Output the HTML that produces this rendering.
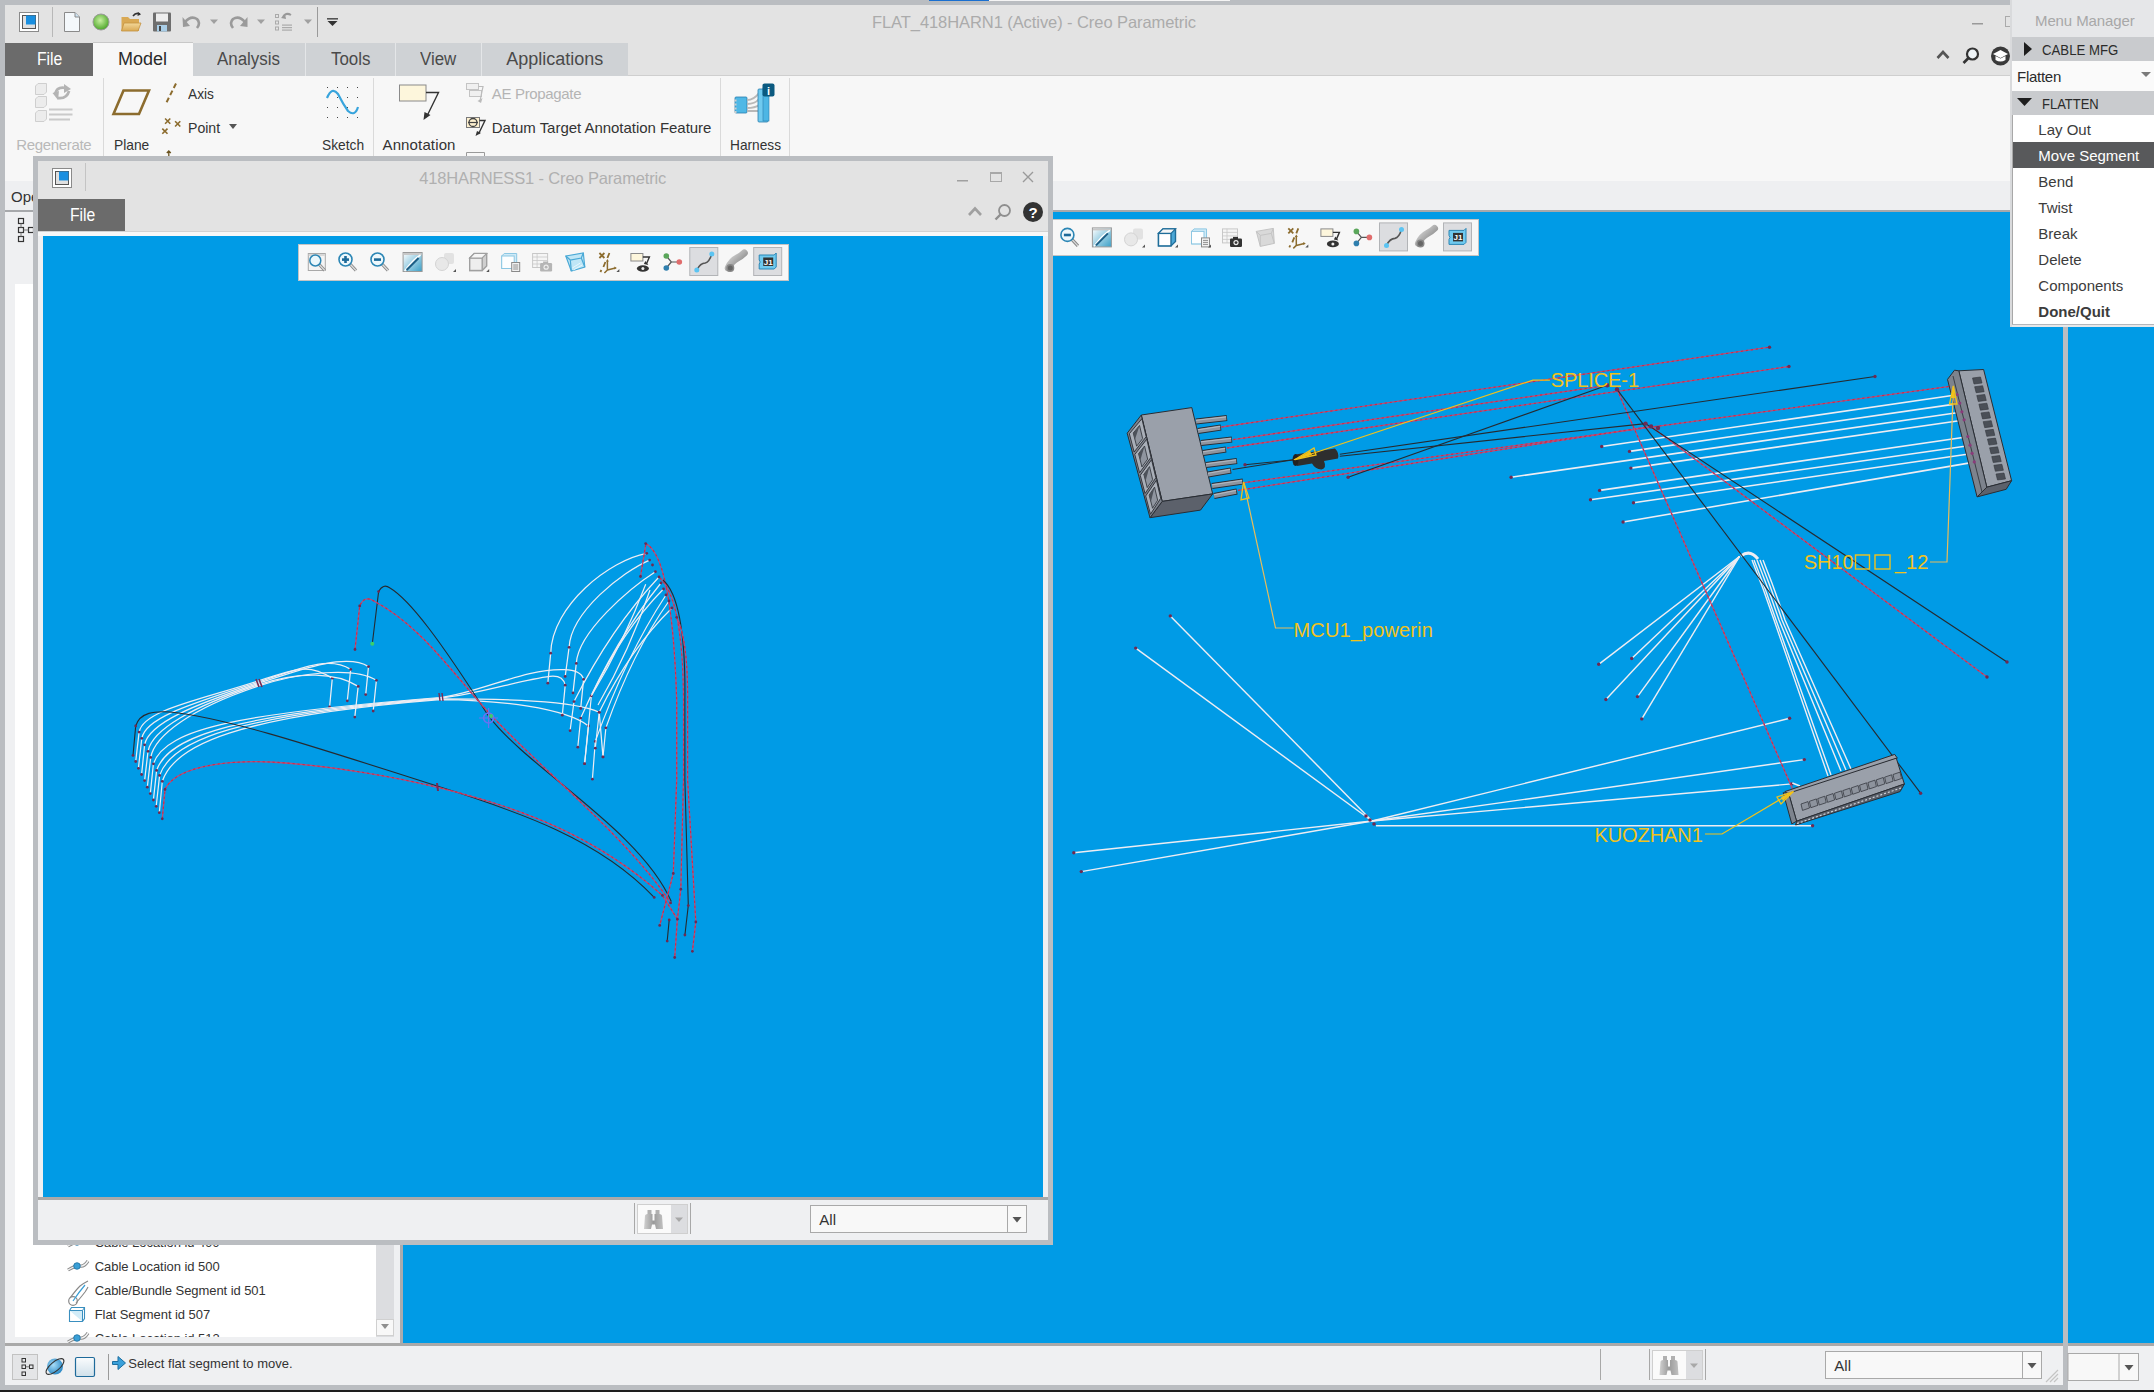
<!DOCTYPE html><html><head><meta charset="utf-8"><style>html,body{margin:0;padding:0;}body{width:2154px;height:1392px;overflow:hidden;position:relative;background:#babdc1;font-family:"Liberation Sans",sans-serif;}</style></head><body><div style="position:absolute;left:0px;top:1390px;width:2154px;height:2px;background:#1e1e1e;"></div>
<div style="position:absolute;left:929px;top:0px;width:60px;height:1px;background:#1a6fd0;"></div>
<div style="position:absolute;left:989px;top:0px;width:241px;height:1px;background:#f4f4f4;"></div>
<div style="position:absolute;left:5px;top:5px;width:2058px;height:70px;background:#e3e3e3;"></div>
<div style="position:absolute;left:5px;top:75px;width:2058px;height:1px;background:#cfcfcf;"></div>
<div style="position:absolute;left:5px;top:76px;width:2058px;height:105px;background:#f7f7f7;"></div>
<div style="position:absolute;left:5px;top:181px;width:2058px;height:29px;background:#eeeff1;"></div>
<div style="position:absolute;left:5px;top:210px;width:2058px;height:2px;background:#a6a8ab;"></div>
<div style="position:absolute;left:5px;top:212px;width:395px;height:1131px;background:#eff0f2;"></div>
<div style="position:absolute;left:15px;top:284px;width:361px;height:1053px;background:#ffffff;"></div>
<div style="position:absolute;left:376px;top:284px;width:18px;height:1053px;background:#dcdde0;"></div>
<div style="position:absolute;left:376px;top:1319px;width:16px;height:15px;background:#f8f8f8;border:1px solid #d0d0d0;"></div>
<svg style="position:absolute;left:380px;top:1323px;" width="12" height="8" viewBox="0 0 12 8"><path d="M1 1 L9 1 L5 6 Z" fill="#8f8f8f"/></svg>
<div style="position:absolute;left:400px;top:212px;width:3px;height:1131px;background:#a9abae;"></div>
<div style="position:absolute;left:403px;top:212px;width:1660px;height:1131px;background:#009be6;"></div>
<div style="position:absolute;left:5px;top:1343px;width:2058px;height:3px;background:#a9a9a9;"></div>
<div style="position:absolute;left:5px;top:1346px;width:2058px;height:39px;background:#eff0f2;"></div>
<div style="position:absolute;left:2068px;top:212px;width:86px;height:1131px;background:#009be6;"></div>
<div style="position:absolute;left:2068px;top:1343px;width:86px;height:3px;background:#a9a9a9;"></div>
<div style="position:absolute;left:2068px;top:1346px;width:86px;height:44px;background:#eff0f2;"></div>
<div style="position:absolute;left:5px;top:43px;width:88px;height:33px;background:#6b6b6b;"></div>
<div style="position:absolute;left:93px;top:42px;width:100px;height:34px;background:#f7f7f7;"></div>
<div style="position:absolute;left:93px;top:42px;width:100px;height:1px;background:#c8c8c8;"></div>
<div style="position:absolute;left:193px;top:43px;width:435px;height:33px;background:#cfd2d5;"></div>
<div style="position:absolute;left:305px;top:43px;width:1px;height:33px;background:#e4e6e8;"></div>
<div style="position:absolute;left:395px;top:43px;width:1px;height:33px;background:#e4e6e8;"></div>
<div style="position:absolute;left:481px;top:43px;width:1px;height:33px;background:#e4e6e8;"></div>
<div style="position:absolute;left:36.7px;top:49.8px;font-family:'Liberation Sans',sans-serif;font-size:18px;line-height:18px;font-weight:400;color:#ffffff;white-space:pre;transform:scaleX(0.8719);transform-origin:0 0;">File</div>
<div style="position:absolute;left:117.9px;top:49.8px;font-family:'Liberation Sans',sans-serif;font-size:18px;line-height:18px;font-weight:400;color:#2b2b2b;white-space:pre;letter-spacing:-0.006px;">Model</div>
<div style="position:absolute;left:217.4px;top:49.6px;font-family:'Liberation Sans',sans-serif;font-size:18px;line-height:18px;font-weight:400;color:#4a4a4a;white-space:pre;transform:scaleX(0.9399);transform-origin:0 0;">Analysis</div>
<div style="position:absolute;left:330.5px;top:49.6px;font-family:'Liberation Sans',sans-serif;font-size:18px;line-height:18px;font-weight:400;color:#4a4a4a;white-space:pre;transform:scaleX(0.9398);transform-origin:0 0;">Tools</div>
<div style="position:absolute;left:420.2px;top:49.6px;font-family:'Liberation Sans',sans-serif;font-size:18px;line-height:18px;font-weight:400;color:#4a4a4a;white-space:pre;transform:scaleX(0.9379);transform-origin:0 0;">View</div>
<div style="position:absolute;left:506.3px;top:49.6px;font-family:'Liberation Sans',sans-serif;font-size:18px;line-height:18px;font-weight:400;color:#4a4a4a;white-space:pre;letter-spacing:-0.005px;">Applications</div>
<div style="position:absolute;left:872px;top:13.6px;font-family:'Liberation Sans',sans-serif;font-size:16.5px;line-height:16.5px;font-weight:400;color:#ababab;white-space:pre;letter-spacing:-0.076px;">FLAT_418HARN1 (Active) - Creo Parametric</div>
<div style="position:absolute;left:103px;top:78px;width:1px;height:103px;background:#dadada;"></div>
<div style="position:absolute;left:373px;top:78px;width:1px;height:103px;background:#dadada;"></div>
<div style="position:absolute;left:720px;top:78px;width:1px;height:103px;background:#dadada;"></div>
<div style="position:absolute;left:789px;top:78px;width:1px;height:103px;background:#dadada;"></div>
<div style="position:absolute;left:16.3px;top:136.8px;font-family:'Liberation Sans',sans-serif;font-size:15px;line-height:15px;font-weight:400;color:#b9b9b9;white-space:pre;letter-spacing:-0.341px;">Regenerate</div>
<div style="position:absolute;left:114.2px;top:136.8px;font-family:'Liberation Sans',sans-serif;font-size:15px;line-height:15px;font-weight:400;color:#333333;white-space:pre;transform:scaleX(0.9199);transform-origin:0 0;">Plane</div>
<div style="position:absolute;left:187.6px;top:86.1px;font-family:'Liberation Sans',sans-serif;font-size:15px;line-height:15px;font-weight:400;color:#333333;white-space:pre;transform:scaleX(0.9138);transform-origin:0 0;">Axis</div>
<div style="position:absolute;left:187.6px;top:120.1px;font-family:'Liberation Sans',sans-serif;font-size:15px;line-height:15px;font-weight:400;color:#333333;white-space:pre;transform:scaleX(0.9385);transform-origin:0 0;">Point</div>
<div style="position:absolute;left:322.2px;top:136.8px;font-family:'Liberation Sans',sans-serif;font-size:15px;line-height:15px;font-weight:400;color:#333333;white-space:pre;transform:scaleX(0.9180);transform-origin:0 0;">Sketch</div>
<div style="position:absolute;left:382.5px;top:137.3px;font-family:'Liberation Sans',sans-serif;font-size:15px;line-height:15px;font-weight:400;color:#333333;white-space:pre;letter-spacing:0.137px;">Annotation</div>
<div style="position:absolute;left:491.8px;top:86.3px;font-family:'Liberation Sans',sans-serif;font-size:15px;line-height:15px;font-weight:400;color:#b4b4b4;white-space:pre;letter-spacing:-0.334px;">AE Propagate</div>
<div style="position:absolute;left:491.8px;top:120.2px;font-family:'Liberation Sans',sans-serif;font-size:15px;line-height:15px;font-weight:400;color:#333333;white-space:pre;letter-spacing:-0.036px;">Datum Target Annotation Feature</div>
<div style="position:absolute;left:729.8px;top:137.3px;font-family:'Liberation Sans',sans-serif;font-size:15px;line-height:15px;font-weight:400;color:#333333;white-space:pre;transform:scaleX(0.9130);transform-origin:0 0;">Harness</div>
<div style="position:absolute;left:11px;top:188.9px;font-family:'Liberation Sans',sans-serif;font-size:15px;line-height:15px;font-weight:400;color:#333333;white-space:pre;">Ope</div>
<div style="position:absolute;left:128.2px;top:1357.0px;font-family:'Liberation Sans',sans-serif;font-size:13px;line-height:13px;font-weight:400;color:#333333;white-space:pre;letter-spacing:0.017px;">Select flat segment to move.</div>
<div style="position:absolute;left:94.7px;top:1236.0px;font-family:'Liberation Sans',sans-serif;font-size:13px;line-height:13px;font-weight:400;color:#333333;white-space:pre;letter-spacing:-0.036px;">Cable Location id 499</div>
<div style="position:absolute;left:94.7px;top:1260.0px;font-family:'Liberation Sans',sans-serif;font-size:13px;line-height:13px;font-weight:400;color:#333333;white-space:pre;letter-spacing:-0.036px;">Cable Location id 500</div>
<div style="position:absolute;left:94.7px;top:1283.5px;font-family:'Liberation Sans',sans-serif;font-size:13px;line-height:13px;font-weight:400;color:#333333;white-space:pre;letter-spacing:-0.064px;">Cable/Bundle Segment id 501</div>
<div style="position:absolute;left:94.7px;top:1308.0px;font-family:'Liberation Sans',sans-serif;font-size:13px;line-height:13px;font-weight:400;color:#333333;white-space:pre;letter-spacing:-0.045px;">Flat Segment id 507</div>
<div style="position:absolute;left:94.7px;top:1332.0px;font-family:'Liberation Sans',sans-serif;font-size:13px;line-height:13px;font-weight:400;color:#333333;white-space:pre;letter-spacing:-0.036px;">Cable Location id 513</div>
<div style="position:absolute;left:15px;top:1337px;width:361px;height:6px;background:#eff0f2;"></div>
<svg style="position:absolute;left:0px;top:0px;pointer-events:none;" width="2154" height="1392" viewBox="0 0 2154 1392"><rect x="19.5" y="12.5" width="19" height="19" fill="#fff" stroke="#8a8a8a"/><rect x="22.5" y="15.5" width="13" height="13" fill="#e0e0e0" stroke="#555"/><rect x="26" y="15.5" width="9.5" height="9" fill="#1a8fe0"/><rect x="52" y="7" width="1" height="30" fill="#b8b8b8"/><path d="M64.5 12.5 L75 12.5 L79.5 17 L79.5 31.5 L64.5 31.5 Z" fill="#f4f8fb" stroke="#8a8a8a"/><path d="M75 12.5 L75 17 L79.5 17" fill="#cde3f2" stroke="#8a8a8a"/><defs><radialGradient id="gb" cx="0.45" cy="0.4" r="0.6"><stop offset="0" stop-color="#c8f0a0"/><stop offset="1" stop-color="#4da62a"/></radialGradient><linearGradient id="fold" x1="0" y1="0" x2="0" y2="1"><stop offset="0" stop-color="#f3d89a"/><stop offset="1" stop-color="#d9a954"/></linearGradient></defs><circle cx="101" cy="22" r="8" fill="url(#gb)" stroke="#9a9a9a" stroke-width="1"/><path d="M121.5 17 L128 17 L130 19 L139 19 L139 31 L121.5 31 Z" fill="#d9a954"/><path d="M124 23 L141 23 L138 31 L121.5 31 Z" fill="url(#fold)" stroke="#c49240" stroke-width="0.8"/><path d="M133 16 Q136 12 140 14" stroke="#333" stroke-width="1.6" fill="none"/><path d="M138 12 L141 14.5 L137.5 16" fill="#333"/><rect x="153" y="12.5" width="18" height="19" rx="1" fill="#6e6e6e"/><rect x="156" y="13.5" width="12" height="8" fill="#eeeeee"/><rect x="157" y="25" width="10" height="6.5" fill="#a9cde6"/><rect x="159" y="26" width="2" height="5" fill="#444"/><path d="M185 22 Q191 15 197 19 Q201 23 197 28" stroke="#9a9a9a" stroke-width="2.6" fill="none"/><path d="M182.5 17 L183 27 L190 26 Z" fill="#9a9a9a"/><path d="M210 19.5 L218 19.5 L214 24 Z" fill="#a0a0a0"/><path d="M245 22 Q239 15 233 19 Q229 23 233 28" stroke="#9a9a9a" stroke-width="2.6" fill="none"/><path d="M247.5 17 L247.5 27 L240 26 Z" fill="#9a9a9a"/><path d="M257 19.5 L265 19.5 L261 24 Z" fill="#a0a0a0"/><rect x="275.5" y="14.5" width="3" height="3" fill="none" stroke="#aaa" stroke-width="1"/><rect x="275.5" y="21" width="3" height="3" fill="none" stroke="#aaa" stroke-width="1"/><rect x="275.5" y="27" width="3" height="3" fill="none" stroke="#aaa" stroke-width="1"/><path d="M283 17 Q286 12 291 15" stroke="#999" stroke-width="2" fill="none"/><path d="M281 18 L285 14 L286 19 Z" fill="#999"/><rect x="282" y="24.5" width="10" height="1.2" fill="#aaa"/><rect x="282" y="27" width="10" height="1.2" fill="#aaa"/><rect x="282" y="29.5" width="10" height="1.2" fill="#aaa"/><path d="M304 19.5 L312 19.5 L308 24 Z" fill="#a0a0a0"/><rect x="317" y="7" width="1" height="30" fill="#9a9a9a"/><rect x="327" y="18" width="11" height="1.6" fill="#555"/><path d="M327.5 21 L337.5 21 L332.5 26 Z" fill="#333"/><rect x="1972" y="23" width="11" height="1.5" fill="#9a9a9a"/><rect x="2005.5" y="16.5" width="8" height="10" fill="none" stroke="#aaa"/><path d="M1937.5 58 L1943 52 L1948.5 58" stroke="#555" stroke-width="2.6" fill="none"/><circle cx="1972.5" cy="54" r="5.5" fill="#eef3f6" stroke="#333" stroke-width="2.2"/><path d="M1968.5 58 L1963.5 63" stroke="#333" stroke-width="2.6"/><circle cx="2000.5" cy="56" r="9.5" fill="#3a3a3a"/><path d="M1993 54 L2000.5 50 L2008 54 L2000.5 58 Z" fill="#fff"/><path d="M1995.5 56 L1995.5 60 Q2000.5 63 2005.5 60 L2005.5 56 L2000.5 58.5 Z" fill="#fff"/><path d="M35.5 86.0 L38 83.5 L46.5 83.5 L46.5 92.0 L44 94.5 L35.5 94.5 Z" fill="#ececec" stroke="#cfcfcf"/><path d="M35.5 99.0 L38 96.5 L46.5 96.5 L46.5 105.0 L44 107.5 L35.5 107.5 Z" fill="#ececec" stroke="#cfcfcf"/><path d="M35.5 113.0 L38 110.5 L46.5 110.5 L46.5 119.0 L44 121.5 L35.5 121.5 Z" fill="#ececec" stroke="#cfcfcf"/><path d="M55 94 Q57 86 66 88" stroke="#b4b4b4" stroke-width="2.8" fill="none"/><path d="M64 84 L71 89 L64 93 Z" fill="#b4b4b4"/><path d="M69 91 Q67 99 58 98" stroke="#b4b4b4" stroke-width="2.8" fill="none"/><path d="M52.5 93 L59 91 L58 100 Z" fill="#b4b4b4"/><rect x="49" y="108.5" width="23.5" height="2" fill="#cacaca"/><rect x="49" y="113.5" width="23.5" height="2" fill="#cacaca"/><rect x="49" y="118.5" width="21" height="2" fill="#cacaca"/><path d="M113.5 114 L123.5 90.5 L149 90.5 L139 114 Z" fill="none" stroke="#8c6c2e" stroke-width="2.6" stroke-linejoin="miter"/><path d="M176 83.5 L166.5 102.5" stroke="#8c6c2e" stroke-width="2" stroke-dasharray="5,3"/><path d="M165.1 118.5 L170.29999999999998 123.69999999999999 M170.29999999999998 118.5 L165.1 123.69999999999999" stroke="#8c6c2e" stroke-width="1.6"/><path d="M175.1 121.30000000000001 L180.29999999999998 126.5 M180.29999999999998 121.30000000000001 L175.1 126.5" stroke="#8c6c2e" stroke-width="1.6"/><path d="M162.3 128.6 L167.5 133.79999999999998 M167.5 128.6 L162.3 133.79999999999998" stroke="#8c6c2e" stroke-width="1.6"/><path d="M229 124 L237 124 L233 129 Z" fill="#555"/><path d="M168.8 151 L168.8 156 M166.8 153 L168.8 151 L170.8 153" stroke="#6b5320" stroke-width="1.3" fill="none"/><rect x="327" y="87" width="1" height="1" fill="#444"/><rect x="327" y="97" width="1" height="1" fill="#444"/><rect x="327" y="107" width="1" height="1" fill="#444"/><rect x="327" y="117" width="1" height="1" fill="#444"/><rect x="337" y="87" width="1" height="1" fill="#444"/><rect x="337" y="97" width="1" height="1" fill="#444"/><rect x="337" y="107" width="1" height="1" fill="#444"/><rect x="337" y="117" width="1" height="1" fill="#444"/><rect x="347" y="87" width="1" height="1" fill="#444"/><rect x="347" y="97" width="1" height="1" fill="#444"/><rect x="347" y="107" width="1" height="1" fill="#444"/><rect x="347" y="117" width="1" height="1" fill="#444"/><rect x="357" y="87" width="1" height="1" fill="#444"/><rect x="357" y="97" width="1" height="1" fill="#444"/><rect x="357" y="107" width="1" height="1" fill="#444"/><rect x="357" y="117" width="1" height="1" fill="#444"/><path d="M327 98 Q332 86 338 94 Q343 104 348 111 Q355 117 358 107" stroke="#38a4dc" stroke-width="2.2" fill="none"/><rect x="399.5" y="85" width="26.5" height="16" fill="#fdf6dc" stroke="#8a8a8a"/><path d="M426 92.5 L438.5 92.5 L427 116" stroke="#333" stroke-width="1.4" fill="none"/><path d="M423.5 120 L424.5 112 L430.5 115 Z" fill="#333"/><rect x="466.5" y="83.5" width="12" height="6" fill="#f0f0f0" stroke="#c4c4c4"/><rect x="469.5" y="90.5" width="12" height="6" fill="#f0f0f0" stroke="#c4c4c4"/><path d="M478.5 86.5 L483 86.5 L480 101" stroke="#bbb" stroke-width="1.2" fill="none"/><path d="M477.5 101 L481 103 L482.5 98 Z" fill="#bbb"/><rect x="466.5" y="117.5" width="13" height="10" fill="#fdf0cf" stroke="#7a7a7a"/><circle cx="473" cy="122.5" r="4" fill="none" stroke="#444" stroke-width="1.3"/><path d="M468 122.5 L478 122.5" stroke="#444" stroke-width="1.2"/><path d="M479.5 120.5 L485 120.5 L478.5 134" stroke="#333" stroke-width="1.4" fill="none"/><path d="M475.5 136 L477 131 L481 133 Z" fill="#333"/><path d="M466.5 156 L466.5 152.5 L484.5 152.5 L484.5 156" stroke="#9a9a9a" stroke-width="1" fill="none"/><rect x="735" y="97" width="12" height="16" rx="1" fill="#4fb8e6" stroke="#2a7fae" stroke-width="0.8"/><rect x="734.5" y="99.5" width="2" height="2" fill="#cfcfcf"/><rect x="734.5" y="103.5" width="2" height="2" fill="#cfcfcf"/><rect x="734.5" y="107.5" width="2" height="2" fill="#cfcfcf"/><rect x="734.5" y="111" width="2" height="2" fill="#cfcfcf"/><path d="M747 100 Q754 100 759 93 M747 104 Q755 104 759 99 M747 108 Q755 108 759 105 M747 111 Q755 111 759 111" stroke="#b8b8b8" stroke-width="2" fill="none"/><rect x="758" y="89" width="10" height="33" rx="1" fill="#6fcaef" stroke="#2a7fae" stroke-width="0.8"/><rect x="763" y="88" width="6" height="33" fill="#4db6e4" stroke="#2a7fae" stroke-width="0.6"/><rect x="762.5" y="83.5" width="12" height="13" rx="2" fill="#0b5a80"/><text x="768.5" y="94.5" font-family="Liberation Sans" font-size="11" font-weight="700" fill="#fff" text-anchor="middle">i</text><rect x="18.5" y="218.5" width="5" height="5" fill="none" stroke="#333" stroke-width="1.2"/><rect x="18.5" y="227.5" width="5" height="5" fill="none" stroke="#333" stroke-width="1.2"/><rect x="18.5" y="236.5" width="5" height="5" fill="none" stroke="#333" stroke-width="1.2"/><rect x="28.5" y="227.5" width="5" height="5" fill="none" stroke="#333" stroke-width="1.2"/><path d="M21 223.5 L21 227.5 M21 232.5 L21 236.5 M23.5 230 L28.5 230" stroke="#777" stroke-width="1"/><path d="M68 1270 Q76 1265 80 1266 Q84 1267 88 1261" stroke="#8a8a8a" stroke-width="3.2" fill="none"/><path d="M68 1270 Q76 1265 80 1266 Q84 1267 88 1261" stroke="#f4f4f4" stroke-width="1.4" fill="none"/><circle cx="77" cy="1266" r="3.3" fill="#3a9fd6" stroke="#1c6fa0" stroke-width="0.8"/><path d="M68 1246 Q76 1241 80 1242 Q84 1243 88 1237" stroke="#8a8a8a" stroke-width="3.2" fill="none"/><path d="M68 1246 Q76 1241 80 1242 Q84 1243 88 1237" stroke="#f4f4f4" stroke-width="1.4" fill="none"/><circle cx="77" cy="1242" r="3.3" fill="#3a9fd6" stroke="#1c6fa0" stroke-width="0.8"/><path d="M68 1342 Q76 1337 80 1338 Q84 1339 88 1333" stroke="#8a8a8a" stroke-width="3.2" fill="none"/><path d="M68 1342 Q76 1337 80 1338 Q84 1339 88 1333" stroke="#f4f4f4" stroke-width="1.4" fill="none"/><circle cx="77" cy="1338" r="3.3" fill="#3a9fd6" stroke="#1c6fa0" stroke-width="0.8"/><circle cx="73" cy="1301" r="4.3" fill="none" stroke="#888" stroke-width="1.2"/><path d="M70 1298 Q76 1290 80 1286 Q84 1283 88 1281 M76 1303 Q82 1296 85 1292 Q87 1289 88 1287" stroke="#888" stroke-width="1.1" fill="none"/><path d="M73 1301 Q79 1292 85 1285" stroke="#3a9fd6" stroke-width="1.2" fill="none"/><path d="M69.5 1310.5 L71.5 1307.5 L84.5 1307.5 L84.5 1318.5 L82.5 1321.5 L69.5 1321.5 Z" fill="#fff" stroke="#3a8fbf" stroke-width="1.1"/><path d="M69.5 1310.5 L82.5 1310.5 L82.5 1321.5 M82.5 1310.5 L84.5 1307.5" stroke="#3a8fbf" stroke-width="1" fill="#d2ecf8"/><rect x="12.5" y="1354.5" width="25" height="25" fill="#e4e5e7" stroke="#c2c2c2"/><rect x="22" y="1358.5" width="3.5" height="3.5" fill="none" stroke="#333" stroke-width="1"/><rect x="22" y="1365" width="3.5" height="3.5" fill="none" stroke="#333" stroke-width="1"/><rect x="22" y="1372" width="3.5" height="3.5" fill="none" stroke="#333" stroke-width="1"/><rect x="29.5" y="1365" width="3.5" height="3.5" fill="none" stroke="#333" stroke-width="1"/><path d="M25.5 1366.8 L29.5 1366.8" stroke="#555" stroke-width="0.8"/><defs><radialGradient id="glb" cx="0.4" cy="0.4" r="0.7"><stop offset="0" stop-color="#a8dcf6"/><stop offset="1" stop-color="#1b7fc0"/></radialGradient><linearGradient id="sq" x1="0" y1="0" x2="0" y2="1"><stop offset="0" stop-color="#fafcfd"/><stop offset="1" stop-color="#cfe0ea"/></linearGradient></defs><circle cx="55" cy="1366.5" r="8" fill="url(#glb)"/><ellipse cx="55" cy="1366.5" rx="11" ry="4.5" transform="rotate(-40 55 1366.5)" fill="none" stroke="#333" stroke-width="1.1"/><rect x="75.5" y="1357.5" width="19" height="19" rx="1.5" fill="url(#sq)" stroke="#1e6a9a" stroke-width="1.2"/><rect x="108" y="1354" width="1" height="26" fill="#9a9a9a"/><path d="M112.5 1361.5 L118 1361.5 L118 1356.5 L125.5 1363 L118 1369.5 L118 1364.5 L112.5 1364.5 Z" fill="#3aa0da" stroke="#1c6fa0" stroke-width="1"/><rect x="1600" y="1349" width="1" height="31" fill="#a8a8a8"/><rect x="1649" y="1349" width="1" height="31" fill="#a8a8a8"/><rect x="1705" y="1349" width="1" height="31" fill="#a8a8a8"/><rect x="1652.5" y="1350.5" width="50" height="29" fill="#fafafa" stroke="#cfcfcf"/><rect x="1686" y="1351" width="16" height="28" fill="#dcdde0"/><defs><linearGradient id="bino" x1="0" y1="0" x2="1" y2="0"><stop offset="0" stop-color="#d0d0d0"/><stop offset="0.5" stop-color="#9a9a9a"/><stop offset="1" stop-color="#c0c0c0"/></linearGradient></defs><g transform="translate(1659,1355.5)"><rect x="4" y="0.5" width="4" height="5" fill="#b0b0b0"/><rect x="12" y="0.5" width="4" height="5" fill="#b0b0b0"/><path d="M0.5 19.5 L1.5 6 Q2 4.5 4 4.5 L9 4.5 L9 11 L11 11 L11 4.5 L16 4.5 Q18 4.5 18.5 6 L19.5 19.5 L12.5 19.5 L11.5 15 L8.5 15 L7.5 19.5 Z" fill="url(#bino)"/></g><path d="M1690 1363.5 L1698 1363.5 L1694 1368 Z" fill="#a8a8a8"/><rect x="1825.5" y="1351.5" width="216" height="27" fill="#f8f8f8" stroke="#a9a9a9"/><rect x="2022" y="1352" width="1" height="26" fill="#a9a9a9"/><path d="M2027.5 1363 L2036.5 1363 L2032 1368.5 Z" fill="#555"/><path d="M2046 1382 L2058 1370 M2050 1382 L2058 1374 M2054 1382 L2058 1378" stroke="#c4c4c4" stroke-width="1.2"/><rect x="2068" y="1353.5" width="70.5" height="27" fill="#f8f8f8" stroke="#a9a9a9"/><rect x="2118.5" y="1354" width="1" height="26" fill="#a9a9a9"/><path d="M2124.5 1365 L2133.5 1365 L2129 1370.5 Z" fill="#555"/><rect x="1052.5" y="219.5" width="426" height="36" fill="#f7f7f7" stroke="#c4c4c4"/><g transform="translate(1058.9,226.4)"><path d="M13 13 L19 19.5" stroke="#888" stroke-width="3.2"/><path d="M13 13 L19 19.5" stroke="#ddd" stroke-width="1.3"/><circle cx="8.5" cy="8.5" r="6.5" fill="#eef8fc" stroke="#2b86b5" stroke-width="1.6"/><rect x="5" y="7.3" width="7" height="2.6" fill="#1d6a99"/></g><g transform="translate(1090.9,226.4)"><defs><linearGradient id="rp" x1="0" y1="0" x2="1" y2="1"><stop offset="0" stop-color="#ffffff"/><stop offset="1" stop-color="#3aa0c8"/></linearGradient></defs><rect x="1.5" y="1.5" width="19" height="19" fill="url(#rp)" stroke="#9a9a9a"/><rect x="2" y="2" width="18" height="2" fill="#c8c8c8"/><path d="M3 20 Q12 8 19 4" stroke="#fff" stroke-width="1.5" fill="none"/><path d="M5 19 L17 7" stroke="#1d5f86" stroke-width="2"/></g><g transform="translate(1123,226.4)"><rect x="10" y="2" width="10" height="11" rx="2" fill="#e2e2e2"/><circle cx="8" cy="13" r="6.5" fill="#e8e8e8" stroke="#d4d4d4"/><path d="M19 21 L22 18 L22 21 Z" fill="#555"/></g><g transform="translate(1156,226.4)"><path d="M2.5 7 L7 2.5 L19.5 2.5 L19.5 15 L15 19.5 L2.5 19.5 Z" fill="#4ca7d6" stroke="#1f6d99" stroke-width="1.4"/><rect x="2.5" y="7" width="12.5" height="12.5" fill="#ffffff" stroke="#1f6d99" stroke-width="1.4"/><path d="M2.5 7 L7 2.5 L19.5 2.5 L15 7 Z" fill="#f6f6f6" stroke="#1f6d99" stroke-width="1.2"/><path d="M19 21 L22 18 L22 21 Z" fill="#555"/></g><g transform="translate(1189,226.4)"><path d="M2.5 5 L5 2.5 L17.5 2.5 L17.5 15 L15 17.5 L2.5 17.5 Z" fill="#cfeaf7" stroke="#8cc7e3"/><rect x="2.5" y="5" width="12.5" height="12.5" fill="#fcfeff" stroke="#8cc7e3"/><rect x="12.5" y="11.5" width="8" height="9" fill="#f2f2f2" stroke="#8a8a8a"/><path d="M14 14 L19 14 M14 16 L19 16 M14 18 L19 18" stroke="#777" stroke-width="0.8"/><path d="M19 21 L22 18 L22 21 Z" fill="#555"/></g><g transform="translate(1221,226.4)"><rect x="1.5" y="2.5" width="15" height="14" fill="#f5f5f5" stroke="#c8c8c8"/><path d="M1.5 6 L16.5 6 M1.5 9.5 L16.5 9.5 M1.5 13 L16.5 13 M6 2.5 L6 16.5" stroke="#c8c8c8" stroke-width="0.8"/><rect x="9" y="12" width="12" height="8.5" rx="1.2" fill="#333"/><rect x="12" y="10.5" width="5" height="2.5" fill="#333"/><circle cx="15" cy="16.2" r="2.6" fill="#eee"/><circle cx="15" cy="16.2" r="1.4" fill="#333"/></g><g transform="translate(1254.3,226.4)"><path d="M2 5 L19 2 L20 17 L6 20 Z" fill="#d9d9d9" stroke="#c4c4c4"/><path d="M2 5 L6 9 L17 7 L19 2" fill="none" stroke="#c4c4c4"/><path d="M6 9 L6 20 M17 7 L20 17" stroke="#c4c4c4"/></g><g transform="translate(1286.3,226.4)"><path d="M2 2 L7 7 M7 2 L2 7" stroke="#8c6c2e" stroke-width="1.8"/><path d="M12 2 L10 7 M8 11 L6 16 M4 19 L3 21" stroke="#8c6c2e" stroke-width="1.8"/><path d="M10 19 L10 10 M10 19 L18 17 M10 19 L7 22" stroke="#8c6c2e" stroke-width="1.5"/><path d="M8.5 10.5 L10 8 L11.5 10.5 Z M17 15.5 L19.5 17 L17 18.5 Z" fill="#8c6c2e"/><path d="M19 21 L22 18 L22 21 Z" fill="#555"/></g><g transform="translate(1319.4,226.4)"><rect x="1.5" y="2.5" width="12" height="7.5" fill="#fdf6dc" stroke="#8a8a8a"/><path d="M13.5 6 L20 6 L17 13" stroke="#333" stroke-width="1.4" fill="none"/><path d="M14.5 13 L19 14 L16 10 Z" fill="#333"/><ellipse cx="13.5" cy="17.5" rx="6" ry="3.3" fill="#333"/><circle cx="13.5" cy="17.5" r="1.5" fill="#eee"/></g><g transform="translate(1351.4,226.4)"><path d="M5 5 L10 11 L18 11 M10 11 L5 17" stroke="#555" stroke-width="1.2" fill="none"/><circle cx="5" cy="5" r="2.8" fill="#5aa65a"/><circle cx="18" cy="11" r="2.8" fill="#e06c6c"/><circle cx="5" cy="17" r="2.8" fill="#2f7fae"/></g><g transform="translate(1383,226.4)"><rect x="-3.5" y="-3.5" width="28" height="28" fill="#dcdde0" stroke="#b2b4b7"/><path d="M3.5 19 Q7 12 12 12 Q16 11 18.5 3" stroke="#555" stroke-width="1.6" fill="none"/><circle cx="3.5" cy="19" r="2.5" fill="#5bc4f2"/><circle cx="18.5" cy="3" r="2.5" fill="#5bc4f2"/></g><g transform="translate(1415.5,226.4)"><defs><linearGradient id="tk" x1="0" y1="0" x2="1" y2="1"><stop offset="0" stop-color="#ddd"/><stop offset="1" stop-color="#777"/></linearGradient></defs><path d="M3 17 Q6 10 12 7 Q16 5 19 2" stroke="url(#tk)" stroke-width="7" fill="none" stroke-linecap="round"/><circle cx="5" cy="17" r="4" fill="#888"/><circle cx="5" cy="17" r="2.5" fill="#666"/></g><g transform="translate(1447,226.4)"><rect x="-3.5" y="-3.5" width="28" height="28" fill="#dcdde0" stroke="#b2b4b7"/><path d="M2 4 L17 4 L19 2 L19 16 L17 18 L2 18 L2 13 Q4 11 2 9 Z" fill="#6fcaef" stroke="#2b86b5" stroke-width="1"/><rect x="6" y="6.5" width="10" height="8.5" fill="#333"/><text x="11" y="14" font-family="Liberation Sans" font-size="8" font-weight="700" fill="#fff" text-anchor="middle">J1</text></g></svg>
<div style="position:absolute;left:1834.2px;top:1357.9px;font-family:'Liberation Sans',sans-serif;font-size:15px;line-height:15px;font-weight:400;color:#333333;white-space:pre;letter-spacing:0.109px;">All</div>
<svg style="position:absolute;left:0px;top:0px;pointer-events:none;" width="2154" height="1392" viewBox="0 0 2154 1392"><defs><clipPath id="mvp"><rect x="403" y="212" width="1660" height="1131"/></clipPath></defs><g clip-path="url(#mvp)"><polyline points="1601.7,446.5 1955.6,395" fill="none" stroke="#eeedf3" stroke-width="1.6" /><circle cx="1601.7" cy="446.5" r="1.7" fill="#6e2a52"/><polyline points="1629.5,451.4 1958.3,403.6" fill="none" stroke="#eeedf3" stroke-width="1.6" /><circle cx="1629.5" cy="451.4" r="1.7" fill="#6e2a52"/><polyline points="1511.1,477.2 1960.4,412.3" fill="none" stroke="#eeedf3" stroke-width="1.6" /><circle cx="1511.1" cy="477.2" r="1.7" fill="#6e2a52"/><polyline points="1630.9,468.1 1962.6,420.3" fill="none" stroke="#eeedf3" stroke-width="1.6" /><circle cx="1630.9" cy="468.1" r="1.7" fill="#6e2a52"/><polyline points="1599.6,490.4 1966.3,437" fill="none" stroke="#eeedf3" stroke-width="1.6" /><circle cx="1599.6" cy="490.4" r="1.7" fill="#6e2a52"/><polyline points="1590.5,499.8 1968.5,445.7" fill="none" stroke="#eeedf3" stroke-width="1.6" /><circle cx="1590.5" cy="499.8" r="1.7" fill="#6e2a52"/><polyline points="1633.5,502.8 1970.6,453.8" fill="none" stroke="#eeedf3" stroke-width="1.6" /><circle cx="1633.5" cy="502.8" r="1.7" fill="#6e2a52"/><polyline points="1623.1,522 1972.8,462.4" fill="none" stroke="#eeedf3" stroke-width="1.6" /><circle cx="1623.1" cy="522" r="1.7" fill="#6e2a52"/><polyline points="1739.5,556.5 1598.7,664.3" fill="none" stroke="#eeedf3" stroke-width="1.45" /><circle cx="1598.7" cy="664.3" r="1.7" fill="#6e2a52"/><polyline points="1739.5,556.5 1631.7,658.5" fill="none" stroke="#eeedf3" stroke-width="1.45" /><circle cx="1631.7" cy="658.5" r="1.7" fill="#6e2a52"/><polyline points="1739.5,556.5 1605.9,699.5" fill="none" stroke="#eeedf3" stroke-width="1.45" /><circle cx="1605.9" cy="699.5" r="1.7" fill="#6e2a52"/><polyline points="1739.5,556.5 1637.5,696.6" fill="none" stroke="#eeedf3" stroke-width="1.45" /><circle cx="1637.5" cy="696.6" r="1.7" fill="#6e2a52"/><polyline points="1739.5,556.5 1641.8,718.9" fill="none" stroke="#eeedf3" stroke-width="1.45" /><circle cx="1641.8" cy="718.9" r="1.7" fill="#6e2a52"/><path d="M1741 556 Q1750 549 1758 559" stroke="#eeedf3" stroke-width="3" fill="none"/><path d="M1752 560 Q1764 590 1774 620 L1828 776" stroke="#eeedf3" stroke-width="1.4" fill="none"/><path d="M1754 560 Q1766 590 1776 620 L1831 775" stroke="#eeedf3" stroke-width="1.4" fill="none"/><path d="M1757 560 Q1769 590 1779 620 L1841 771" stroke="#eeedf3" stroke-width="1.4" fill="none"/><path d="M1760 560 Q1772 590 1782 620 L1846 770" stroke="#eeedf3" stroke-width="1.4" fill="none"/><path d="M1763 560 Q1775 590 1785 620 L1851 769" stroke="#eeedf3" stroke-width="1.4" fill="none"/><polyline points="1372,821 1170.3,615.9" fill="none" stroke="#eeedf3" stroke-width="1.45" /><circle cx="1170.3" cy="615.9" r="1.7" fill="#6e2a52"/><polyline points="1372,821 1135.7,648.1" fill="none" stroke="#eeedf3" stroke-width="1.45" /><circle cx="1135.7" cy="648.1" r="1.7" fill="#6e2a52"/><polyline points="1372,821 1073.8,852.8" fill="none" stroke="#eeedf3" stroke-width="1.45" /><circle cx="1073.8" cy="852.8" r="1.7" fill="#6e2a52"/><polyline points="1372,821 1081.3,871.6" fill="none" stroke="#eeedf3" stroke-width="1.45" /><circle cx="1081.3" cy="871.6" r="1.7" fill="#6e2a52"/><polyline points="1372,821 1789.6,718.3" fill="none" stroke="#eeedf3" stroke-width="1.45" /><circle cx="1789.6" cy="718.3" r="1.7" fill="#6e2a52"/><polyline points="1372,821 1804.3,759.6" fill="none" stroke="#eeedf3" stroke-width="1.45" /><circle cx="1804.3" cy="759.6" r="1.7" fill="#6e2a52"/><polyline points="1372,821 1791.7,783.9" fill="none" stroke="#eeedf3" stroke-width="1.45" /><circle cx="1791.7" cy="783.9" r="1.7" fill="#6e2a52"/><polyline points="1376,825.7 1812.6,825.7" fill="none" stroke="#eeedf3" stroke-width="1.5" /><circle cx="1812.6" cy="825.7" r="1.7" fill="#6e2a52"/><polyline points="1792.3,783 1800,786" fill="none" stroke="#eeedf3" stroke-width="1.5" /><circle cx="1366" cy="816" r="1.8" fill="#6e2a52"/><circle cx="1370" cy="820" r="1.8" fill="#6e2a52"/><circle cx="1374" cy="824" r="1.8" fill="#6e2a52"/><polyline points="1221.4,427 1769.5,347.2" fill="none" stroke="#b4527e" stroke-width="1.3" /><polyline points="1221.4,427 1769.5,347.2" fill="none" stroke="#d42844" stroke-width="1.1" stroke-dasharray="2.2,2.8"/><circle cx="1769.5" cy="347.2" r="1.7" fill="#6e2a52"/><polyline points="1233.2,439.6 1608,385.3" fill="none" stroke="#b4527e" stroke-width="1.3" /><polyline points="1233.2,439.6 1608,385.3" fill="none" stroke="#d42844" stroke-width="1.1" stroke-dasharray="2.2,2.8"/><polyline points="1227,448 1789,366.5" fill="none" stroke="#b4527e" stroke-width="1.3" /><polyline points="1227,448 1789,366.5" fill="none" stroke="#d42844" stroke-width="1.1" stroke-dasharray="2.2,2.8"/><circle cx="1789" cy="366.5" r="1.7" fill="#6e2a52"/><polyline points="1243,482.8 1953.4,385.9" fill="none" stroke="#b4527e" stroke-width="1.3" /><polyline points="1243,482.8 1953.4,385.9" fill="none" stroke="#d42844" stroke-width="1.1" stroke-dasharray="2.2,2.8"/><polyline points="1238.1,490.4 1651,426.4 1987,677" fill="none" stroke="#b4527e" stroke-width="1.3" /><polyline points="1238.1,490.4 1651,426.4 1987,677" fill="none" stroke="#d42844" stroke-width="1.1" stroke-dasharray="2.2,2.8"/><circle cx="1987" cy="677" r="1.7" fill="#6e2a52"/><polyline points="1617,389.4 1792.3,788.4" fill="none" stroke="#b4527e" stroke-width="1.3" /><polyline points="1617,389.4 1792.3,788.4" fill="none" stroke="#d42844" stroke-width="1.1" stroke-dasharray="2.2,2.8"/><polyline points="1245,464.7 1293.8,459.8" fill="none" stroke="#262a30" stroke-width="1.1" /><circle cx="1245" cy="464.7" r="1.7" fill="#6e2a52"/><polyline points="1232.5,469.5 1293.8,459.8" fill="none" stroke="#262a30" stroke-width="1.1" /><polyline points="1339.8,454.2 1875,376.5" fill="none" stroke="#262a30" stroke-width="1.1" /><circle cx="1875" cy="376.5" r="1.7" fill="#6e2a52"/><polyline points="1339.8,456.2 1645.5,423.6 2007,662" fill="none" stroke="#262a30" stroke-width="1.1" /><circle cx="2007" cy="662" r="1.7" fill="#6e2a52"/><polyline points="1348.1,477.2 1607.2,385.3" fill="none" stroke="#262a30" stroke-width="1.1" /><circle cx="1348.1" cy="477.2" r="1.7" fill="#6e2a52"/><polyline points="1617,389.4 1920.6,793.2" fill="none" stroke="#262a30" stroke-width="1.1" /><circle cx="1920.6" cy="793.2" r="1.7" fill="#6e2a52"/><circle cx="1607.2" cy="385.3" r="2.2" fill="#6e2a52"/><circle cx="1617" cy="389.4" r="2.2" fill="#6e2a52"/><circle cx="1645.5" cy="423.6" r="2.2" fill="#6e2a52"/><circle cx="1651.1" cy="426.4" r="2.2" fill="#6e2a52"/><circle cx="1658" cy="428" r="2.2" fill="#6e2a52"/><polygon points="1141.3,415 1191.8,407.6 1212.7,493.9 1162.2,501.4" fill="#9aa0aa" stroke="#2a2d33" stroke-width="1"/><polygon points="1162.2,501.4 1212.7,493.9 1200.5,510.1 1150,517.7" fill="#5c616b" stroke="#2a2d33" stroke-width="1"/><polygon points="1127.2,433.2 1141.3,415 1162.2,501.4 1150,517.7" fill="#7d838d" stroke="#2a2d33" stroke-width="1"/><polygon points="1129.327,433.745 1141.8909999999998,418.73 1146.1589999999999,436.77 1134.123,452.005" fill="#a9afb8" stroke="#2a2d33" stroke-width="0.9"/><polygon points="1133.2679999999998,432.99125000000004 1139.55,425.48375 1142.65,438.57875 1136.632,446.19624999999996" fill="#8f959f" stroke="#2a2d33" stroke-width="0.8"/><polygon points="1133.2679999999998,432.99125000000004 1139.55,425.48375 1134.9499999999998,439.59375" fill="#4d525a"/><polygon points="1134.777,454.495 1146.741,439.23 1151.009,457.27 1139.5729999999999,472.755" fill="#a9afb8" stroke="#2a2d33" stroke-width="0.9"/><polygon points="1138.568,453.67875000000004 1144.55,446.04625 1147.65,459.14125 1141.9319999999998,466.88374999999996" fill="#8f959f" stroke="#2a2d33" stroke-width="0.8"/><polygon points="1138.568,453.67875000000004 1144.55,446.04625 1140.25,460.28125" fill="#4d525a"/><polygon points="1140.227,475.245 1151.591,459.73 1155.859,477.77 1145.023,493.505" fill="#a9afb8" stroke="#2a2d33" stroke-width="0.9"/><polygon points="1143.8680000000002,474.36625000000004 1149.55,466.60875 1152.6499999999999,479.70375 1147.232,487.57124999999996" fill="#8f959f" stroke="#2a2d33" stroke-width="0.8"/><polygon points="1143.8680000000002,474.36625000000004 1149.55,466.60875 1145.5500000000002,480.96875" fill="#4d525a"/><polygon points="1145.677,495.995 1156.441,480.23 1160.709,498.27 1150.473,514.255" fill="#a9afb8" stroke="#2a2d33" stroke-width="0.9"/><polygon points="1149.168,495.05375000000004 1154.55,487.17125 1157.65,500.26625 1152.532,508.25874999999996" fill="#8f959f" stroke="#2a2d33" stroke-width="0.8"/><polygon points="1149.168,495.05375000000004 1154.55,487.17125 1150.85,501.65625" fill="#4d525a"/><line x1="1196" y1="421.5" x2="1227" y2="418" stroke="#2a2d33" stroke-width="6.2"/><line x1="1196" y1="421.5" x2="1226.2" y2="418.1" stroke="#8e949e" stroke-width="4.2"/><line x1="1196" y1="420.3" x2="1226.2" y2="416.9" stroke="#b4bac3" stroke-width="1"/><line x1="1198" y1="431" x2="1221" y2="427.5" stroke="#2a2d33" stroke-width="6.2"/><line x1="1198" y1="431" x2="1220.2" y2="427.6" stroke="#8e949e" stroke-width="4.2"/><line x1="1198" y1="429.8" x2="1220.2" y2="426.4" stroke="#b4bac3" stroke-width="1"/><line x1="1201" y1="443" x2="1232" y2="439.5" stroke="#2a2d33" stroke-width="6.2"/><line x1="1201" y1="443" x2="1231.2" y2="439.6" stroke="#8e949e" stroke-width="4.2"/><line x1="1201" y1="441.8" x2="1231.2" y2="438.4" stroke="#b4bac3" stroke-width="1"/><line x1="1203" y1="453" x2="1226" y2="449.5" stroke="#2a2d33" stroke-width="6.2"/><line x1="1203" y1="453" x2="1225.2" y2="449.6" stroke="#8e949e" stroke-width="4.2"/><line x1="1203" y1="451.8" x2="1225.2" y2="448.4" stroke="#b4bac3" stroke-width="1"/><line x1="1206" y1="465" x2="1237" y2="461" stroke="#2a2d33" stroke-width="6.2"/><line x1="1206" y1="465" x2="1236.2" y2="461.1" stroke="#8e949e" stroke-width="4.2"/><line x1="1206" y1="463.8" x2="1236.2" y2="459.9" stroke="#b4bac3" stroke-width="1"/><line x1="1208" y1="474.5" x2="1231" y2="470.5" stroke="#2a2d33" stroke-width="6.2"/><line x1="1208" y1="474.5" x2="1230.2" y2="470.6" stroke="#8e949e" stroke-width="4.2"/><line x1="1208" y1="473.3" x2="1230.2" y2="469.4" stroke="#b4bac3" stroke-width="1"/><line x1="1212" y1="486" x2="1243" y2="481.5" stroke="#2a2d33" stroke-width="6.2"/><line x1="1212" y1="486" x2="1242.2" y2="481.6" stroke="#8e949e" stroke-width="4.2"/><line x1="1212" y1="484.8" x2="1242.2" y2="480.4" stroke="#b4bac3" stroke-width="1"/><line x1="1214" y1="496" x2="1237" y2="491.5" stroke="#2a2d33" stroke-width="6.2"/><line x1="1214" y1="496" x2="1236.2" y2="491.6" stroke="#8e949e" stroke-width="4.2"/><line x1="1214" y1="494.8" x2="1236.2" y2="490.4" stroke="#b4bac3" stroke-width="1"/><path d="M1295 454.5 L1335 448.5 Q1339.5 453 1338 458.5 L1324 461 Q1327 468 1321.5 469.5 Q1315 469 1312 463.5 L1297 466 Q1291 460.5 1295 454.5 Z" fill="#2e2e2e"/><ellipse cx="1295.5" cy="460" rx="3" ry="6" fill="#222"/><polygon points="1958.8,370.8 1983.6,369.5 2011.6,480.7 1986.8,487.2" fill="#9aa0aa" stroke="#2a2d33" stroke-width="1"/><polygon points="1947.5,379.4 1954.5,370.2 1958.8,370.8 1986.8,487.2 1977.1,496.9" fill="#7d838d" stroke="#2a2d33" stroke-width="1"/><polygon points="1986.8,487.2 2011.6,480.7 2006.2,489.3 1977.1,496.9" fill="#5c616b" stroke="#2a2d33" stroke-width="1"/><line x1="1953" y1="376" x2="1982" y2="492" stroke="#2a2d33" stroke-width="0.8"/><polygon points="1972.5,378.0 1980.5,377.0 1982.0,383.0 1974.0,384.0" fill="#4a4f57" stroke="#33363c" stroke-width="0.6"/><polygon points="1974.6363636363637,386.72727272727275 1982.6363636363637,385.72727272727275 1984.1363636363637,391.72727272727275 1976.1363636363637,392.72727272727275" fill="#4a4f57" stroke="#33363c" stroke-width="0.6"/><polygon points="1976.7727272727273,395.45454545454544 1984.7727272727273,394.45454545454544 1986.2727272727273,400.45454545454544 1978.2727272727273,401.45454545454544" fill="#4a4f57" stroke="#33363c" stroke-width="0.6"/><polygon points="1978.909090909091,404.1818181818182 1986.909090909091,403.1818181818182 1988.409090909091,409.1818181818182 1980.409090909091,410.1818181818182" fill="#4a4f57" stroke="#33363c" stroke-width="0.6"/><polygon points="1981.0454545454545,412.9090909090909 1989.0454545454545,411.9090909090909 1990.5454545454545,417.9090909090909 1982.5454545454545,418.9090909090909" fill="#4a4f57" stroke="#33363c" stroke-width="0.6"/><polygon points="1983.1818181818182,421.6363636363636 1991.1818181818182,420.6363636363636 1992.6818181818182,426.6363636363636 1984.6818181818182,427.6363636363636" fill="#4a4f57" stroke="#33363c" stroke-width="0.6"/><polygon points="1985.3181818181818,430.3636363636364 1993.3181818181818,429.3636363636364 1994.8181818181818,435.3636363636364 1986.8181818181818,436.3636363636364" fill="#4a4f57" stroke="#33363c" stroke-width="0.6"/><polygon points="1987.4545454545455,439.0909090909091 1995.4545454545455,438.0909090909091 1996.9545454545455,444.0909090909091 1988.9545454545455,445.0909090909091" fill="#4a4f57" stroke="#33363c" stroke-width="0.6"/><polygon points="1989.590909090909,447.8181818181818 1997.590909090909,446.8181818181818 1999.090909090909,452.8181818181818 1991.090909090909,453.8181818181818" fill="#4a4f57" stroke="#33363c" stroke-width="0.6"/><polygon points="1991.7272727272727,456.54545454545456 1999.7272727272727,455.54545454545456 2001.2272727272727,461.54545454545456 1993.2272727272727,462.54545454545456" fill="#4a4f57" stroke="#33363c" stroke-width="0.6"/><polygon points="1993.8636363636363,465.27272727272725 2001.8636363636363,464.27272727272725 2003.3636363636363,470.27272727272725 1995.3636363636363,471.27272727272725" fill="#4a4f57" stroke="#33363c" stroke-width="0.6"/><polygon points="1996.0,474.0 2004.0,473.0 2005.5,479.0 1997.5,480.0" fill="#4a4f57" stroke="#33363c" stroke-width="0.6"/><circle cx="1957.1" cy="394.5" r="1.6" fill="#8a3a7a"/><circle cx="1959.8" cy="403.1" r="1.6" fill="#8a3a7a"/><circle cx="1961.9" cy="411.8" r="1.6" fill="#8a3a7a"/><circle cx="1964.1" cy="419.8" r="1.6" fill="#8a3a7a"/><circle cx="1967.8" cy="436.5" r="1.6" fill="#8a3a7a"/><circle cx="1970.0" cy="445.2" r="1.6" fill="#8a3a7a"/><circle cx="1972.1" cy="453.3" r="1.6" fill="#8a3a7a"/><circle cx="1974.3" cy="461.9" r="1.6" fill="#8a3a7a"/><polygon points="1784.8,791.6 1894.7,754.4 1897.4,758.2 1789.1,794.8" fill="#9aa0aa" stroke="#2a2d33" stroke-width="1"/><polygon points="1788.6,793.2 1896.3,758.2 1904.4,784 1796.6,821.2" fill="#9aa0aa" stroke="#2a2d33" stroke-width="1"/><polygon points="1783.2,792.7 1788.6,793.2 1796.6,821.2 1791.8,823.9" fill="#7d838d" stroke="#2a2d33" stroke-width="1"/><polygon points="1796.6,821.2 1904.4,784 1900.1,791.6 1795.6,825" fill="#5c616b" stroke="#2a2d33" stroke-width="1"/><polygon points="1801.0,804.0 1808.0,801.6 1809.5,808.0 1802.5,810.4" fill="#8d939d" stroke="#2a2d33" stroke-width="0.7"/><polygon points="1809.3636363636363,801.3181818181819 1816.3636363636363,798.9181818181819 1817.8636363636363,805.3181818181819 1810.8636363636363,807.7181818181818" fill="#8d939d" stroke="#2a2d33" stroke-width="0.7"/><polygon points="1817.7272727272727,798.6363636363636 1824.7272727272727,796.2363636363636 1826.2272727272727,802.6363636363636 1819.2272727272727,805.0363636363636" fill="#8d939d" stroke="#2a2d33" stroke-width="0.7"/><polygon points="1826.090909090909,795.9545454545455 1833.090909090909,793.5545454545455 1834.590909090909,799.9545454545455 1827.590909090909,802.3545454545455" fill="#8d939d" stroke="#2a2d33" stroke-width="0.7"/><polygon points="1834.4545454545455,793.2727272727273 1841.4545454545455,790.8727272727273 1842.9545454545455,797.2727272727273 1835.9545454545455,799.6727272727272" fill="#8d939d" stroke="#2a2d33" stroke-width="0.7"/><polygon points="1842.8181818181818,790.5909090909091 1849.8181818181818,788.1909090909091 1851.3181818181818,794.5909090909091 1844.3181818181818,796.9909090909091" fill="#8d939d" stroke="#2a2d33" stroke-width="0.7"/><polygon points="1851.1818181818182,787.9090909090909 1858.1818181818182,785.5090909090909 1859.6818181818182,791.9090909090909 1852.6818181818182,794.3090909090909" fill="#8d939d" stroke="#2a2d33" stroke-width="0.7"/><polygon points="1859.5454545454545,785.2272727272727 1866.5454545454545,782.8272727272728 1868.0454545454545,789.2272727272727 1861.0454545454545,791.6272727272727" fill="#8d939d" stroke="#2a2d33" stroke-width="0.7"/><polygon points="1867.909090909091,782.5454545454545 1874.909090909091,780.1454545454545 1876.409090909091,786.5454545454545 1869.409090909091,788.9454545454545" fill="#8d939d" stroke="#2a2d33" stroke-width="0.7"/><polygon points="1876.2727272727273,779.8636363636364 1883.2727272727273,777.4636363636364 1884.7727272727273,783.8636363636364 1877.7727272727273,786.2636363636364" fill="#8d939d" stroke="#2a2d33" stroke-width="0.7"/><polygon points="1884.6363636363637,777.1818181818181 1891.6363636363637,774.7818181818182 1893.1363636363637,781.1818181818181 1886.1363636363637,783.5818181818181" fill="#8d939d" stroke="#2a2d33" stroke-width="0.7"/><polygon points="1893.0,774.5 1900.0,772.1 1901.5,778.5 1894.5,780.9" fill="#8d939d" stroke="#2a2d33" stroke-width="0.7"/><polyline points="1797,823.5 1901,788" fill="none" stroke="#cfd3d8" stroke-width="1.2" stroke-dasharray="2,2"/><polyline points="1293.8,459.8 1533,380.1 1549.9,380.1" fill="none" stroke="#f2c21a" stroke-width="1.2" /><polygon points="1295,459.5 1314,448 1316,455" fill="none" stroke="#f2c21a" stroke-width="1.3"/><polygon points="1295,459.5 1310,451 1312,455" fill="#f2c21a"/><polyline points="1243.5,481.8 1275.5,628 1293.6,628" fill="none" stroke="#e8bc5a" stroke-width="1.2" /><polygon points="1243.5,482 1241,500 1249,498" fill="none" stroke="#f2c21a" stroke-width="1.3"/><polyline points="1953.4,386 1947,562 1930,562" fill="none" stroke="#e8bc5a" stroke-width="1.2" /><polygon points="1953.4,386 1949.5,404 1957,404" fill="none" stroke="#f2c21a" stroke-width="1.3"/><polygon points="1953.4,386 1951,398 1955,398" fill="#f2c21a"/><polyline points="1705,834 1722,834 1793.4,791.6" fill="none" stroke="#f2c21a" stroke-width="1.2" /><polygon points="1793.4,791.6 1777,797 1781,804" fill="none" stroke="#f2c21a" stroke-width="1.3"/><polygon points="1793.4,791.6 1781,797 1783,801" fill="#f2c21a"/><rect x="1855.5" y="555" width="14" height="14" fill="none" stroke="#f2c21a" stroke-width="1.4"/><rect x="1875" y="555" width="15" height="14" fill="none" stroke="#f2c21a" stroke-width="1.4"/></g></svg>
<div style="position:absolute;left:1550.7px;top:370.2px;font-family:'Liberation Sans',sans-serif;font-size:20px;line-height:20px;font-weight:400;color:#f2c21a;white-space:pre;letter-spacing:-0.080px;">SPLICE-1</div>
<div style="position:absolute;left:1293.6px;top:619.5px;font-family:'Liberation Sans',sans-serif;font-size:20px;line-height:20px;font-weight:400;color:#f2c21a;white-space:pre;letter-spacing:0.121px;">MCU1_powerin</div>
<div style="position:absolute;left:1803.8px;top:552.3px;font-family:'Liberation Sans',sans-serif;font-size:20px;line-height:20px;font-weight:400;color:#f2c21a;white-space:pre;letter-spacing:-0.083px;">SH10</div>
<div style="position:absolute;left:1894.7px;top:552.3px;font-family:'Liberation Sans',sans-serif;font-size:20px;line-height:20px;font-weight:400;color:#f2c21a;white-space:pre;letter-spacing:0.108px;">_12</div>
<div style="position:absolute;left:1594.5px;top:824.6px;font-family:'Liberation Sans',sans-serif;font-size:20px;line-height:20px;font-weight:400;color:#f2c21a;white-space:pre;letter-spacing:-0.088px;">KUOZHAN1</div>
<div style="position:absolute;left:33px;top:156px;width:1020px;height:89px;background:#babdc1;"></div>
<div style="position:absolute;left:33px;top:156px;width:5px;height:1089px;background:#babdc1;"></div>
<div style="position:absolute;left:1048px;top:156px;width:5px;height:1089px;background:#babdc1;"></div>
<div style="position:absolute;left:33px;top:1240px;width:1020px;height:5px;background:#babdc1;"></div>
<div style="position:absolute;left:38px;top:161px;width:1010px;height:70px;background:#e3e3e3;"></div>
<div style="position:absolute;left:38px;top:199px;width:87px;height:32px;background:#6b6b6b;"></div>
<div style="position:absolute;left:69.8px;top:205.8px;font-family:'Liberation Sans',sans-serif;font-size:18px;line-height:18px;font-weight:400;color:#ffffff;white-space:pre;transform:scaleX(0.8719);transform-origin:0 0;">File</div>
<div style="position:absolute;left:38px;top:231px;width:1010px;height:1px;background:#d2d2d2;"></div>
<div style="position:absolute;left:38px;top:232px;width:1010px;height:4px;background:#f7f7f7;"></div>
<div style="position:absolute;left:38px;top:236px;width:5px;height:961px;background:#eff0f2;"></div>
<div style="position:absolute;left:1043px;top:236px;width:5px;height:961px;background:#eff0f2;"></div>
<div style="position:absolute;left:43px;top:236px;width:1000px;height:961px;background:#009be6;"></div>
<div style="position:absolute;left:38px;top:1197px;width:1010px;height:3px;background:#a9a9a9;"></div>
<div style="position:absolute;left:38px;top:1200px;width:1010px;height:40px;background:#eff0f2;"></div>
<div style="position:absolute;left:419.2px;top:169.7px;font-family:'Liberation Sans',sans-serif;font-size:16.5px;line-height:16.5px;font-weight:400;color:#b0b0b0;white-space:pre;letter-spacing:-0.147px;">418HARNESS1 - Creo Parametric</div>
<div style="position:absolute;left:85px;top:163px;width:1px;height:28px;background:#c4c4c4;"></div>
<svg style="position:absolute;left:0px;top:0px;pointer-events:none;" width="2154" height="1392" viewBox="0 0 2154 1392"><rect x="52.5" y="168.5" width="19" height="19" fill="#fff" stroke="#8a8a8a"/><rect x="55.5" y="171.5" width="13" height="13" fill="#e0e0e0" stroke="#555"/><rect x="59" y="171.5" width="9.5" height="9" fill="#1a8fe0"/><rect x="957" y="180" width="11" height="1.5" fill="#a0a0a0"/><rect x="990.5" y="172.5" width="11" height="9" fill="none" stroke="#a8a8a8"/><rect x="990.5" y="172.5" width="11" height="1.5" fill="#a8a8a8"/><path d="M1023 172 L1033 182 M1033 172 L1023 182" stroke="#9a9a9a" stroke-width="1.4"/><path d="M969 215 L975 208.5 L981 215" stroke="#a0a0a0" stroke-width="2.6" fill="none"/><circle cx="1004.5" cy="210.5" r="5.5" fill="none" stroke="#8f8f8f" stroke-width="1.8"/><path d="M1000.5 214.5 L995.5 219.5" stroke="#8f8f8f" stroke-width="2.4"/><circle cx="1033" cy="212" r="10" fill="#333"/><text x="1033" y="218" font-family="Liberation Sans" font-size="15" font-weight="700" fill="#fff" text-anchor="middle">?</text><rect x="298.5" y="244.5" width="490" height="36" fill="#f7f7f7" stroke="#c4c4c4"/><g transform="translate(305.8,251)"><rect x="2.5" y="2.5" width="17" height="17" fill="#f4f4f4" stroke="#a9a9a9"/><rect x="3" y="3" width="16" height="2" fill="#d8d8d8"/><path d="M13 13 L19 19.5" stroke="#888" stroke-width="3"/><path d="M13 13 L19 19.5" stroke="#ddd" stroke-width="1.2"/><circle cx="9.5" cy="9.5" r="5.5" fill="#eaf7fc" stroke="#2b86b5" stroke-width="1.5"/></g><g transform="translate(337,251)"><path d="M13 13 L19 19.5" stroke="#888" stroke-width="3.2"/><path d="M13 13 L19 19.5" stroke="#ddd" stroke-width="1.3"/><circle cx="8.5" cy="8.5" r="6.5" fill="#eef8fc" stroke="#2b86b5" stroke-width="1.6"/><rect x="5" y="7.3" width="7" height="2.6" fill="#1d6a99"/><rect x="7.2" y="5" width="2.6" height="7" fill="#1d6a99"/></g><g transform="translate(369,251)"><path d="M13 13 L19 19.5" stroke="#888" stroke-width="3.2"/><path d="M13 13 L19 19.5" stroke="#ddd" stroke-width="1.3"/><circle cx="8.5" cy="8.5" r="6.5" fill="#eef8fc" stroke="#2b86b5" stroke-width="1.6"/><rect x="5" y="7.3" width="7" height="2.6" fill="#1d6a99"/></g><g transform="translate(401.6,251)"><defs><linearGradient id="rp" x1="0" y1="0" x2="1" y2="1"><stop offset="0" stop-color="#ffffff"/><stop offset="1" stop-color="#3aa0c8"/></linearGradient></defs><rect x="1.5" y="1.5" width="19" height="19" fill="url(#rp)" stroke="#9a9a9a"/><rect x="2" y="2" width="18" height="2" fill="#c8c8c8"/><path d="M3 20 Q12 8 19 4" stroke="#fff" stroke-width="1.5" fill="none"/><path d="M5 19 L17 7" stroke="#1d5f86" stroke-width="2"/></g><g transform="translate(434,251)"><rect x="10" y="2" width="10" height="11" rx="2" fill="#e2e2e2"/><circle cx="8" cy="13" r="6.5" fill="#e8e8e8" stroke="#d4d4d4"/><path d="M19 21 L22 18 L22 21 Z" fill="#555"/></g><g transform="translate(467.2,251)"><path d="M2.5 7 L7 2.5 L19.5 2.5 L19.5 15 L15 19.5 L2.5 19.5 Z" fill="#cfcfcf" stroke="#a0a0a0" stroke-width="1.4"/><rect x="2.5" y="7" width="12.5" height="12.5" fill="#eeeeee" stroke="#a0a0a0" stroke-width="1.4"/><path d="M2.5 7 L7 2.5 L19.5 2.5 L15 7 Z" fill="#f6f6f6" stroke="#a0a0a0" stroke-width="1.2"/><path d="M19 21 L22 18 L22 21 Z" fill="#555"/></g><g transform="translate(499.2,251)"><path d="M2.5 5 L5 2.5 L17.5 2.5 L17.5 15 L15 17.5 L2.5 17.5 Z" fill="#cfeaf7" stroke="#8cc7e3"/><rect x="2.5" y="5" width="12.5" height="12.5" fill="#fcfeff" stroke="#8cc7e3"/><rect x="12.5" y="11.5" width="8" height="9" fill="#f2f2f2" stroke="#8a8a8a"/><path d="M14 14 L19 14 M14 16 L19 16 M14 18 L19 18" stroke="#777" stroke-width="0.8"/></g><g transform="translate(531.1,251)"><rect x="1.5" y="2.5" width="15" height="14" fill="#f5f5f5" stroke="#c8c8c8"/><path d="M1.5 6 L16.5 6 M1.5 9.5 L16.5 9.5 M1.5 13 L16.5 13 M6 2.5 L6 16.5" stroke="#c8c8c8" stroke-width="0.8"/><rect x="9" y="12" width="12" height="8.5" rx="1.2" fill="#b5b5b5"/><rect x="12" y="10.5" width="5" height="2.5" fill="#b5b5b5"/><circle cx="15" cy="16.2" r="2.6" fill="#eee"/><circle cx="15" cy="16.2" r="1.4" fill="#b5b5b5"/></g><g transform="translate(564.3,251)"><path d="M1.5 5 L19 2 L20.5 16 L7 20 Z" fill="#bfe6f6" stroke="#4aa9d6" stroke-width="1.2"/><path d="M1.5 5 L6 9 L17 7 L19 2 M6 9 L7 20 M17 7 L20.5 16" fill="none" stroke="#4aa9d6" stroke-width="1.2"/><path d="M8 17 L16 12 M9 19 L18 14" stroke="#e8f7fd" stroke-width="1"/></g><g transform="translate(597.4,251)"><path d="M2 2 L7 7 M7 2 L2 7" stroke="#8c6c2e" stroke-width="1.8"/><path d="M12 2 L10 7 M8 11 L6 16 M4 19 L3 21" stroke="#8c6c2e" stroke-width="1.8"/><path d="M10 19 L10 10 M10 19 L18 17 M10 19 L7 22" stroke="#8c6c2e" stroke-width="1.5"/><path d="M8.5 10.5 L10 8 L11.5 10.5 Z M17 15.5 L19.5 17 L17 18.5 Z" fill="#8c6c2e"/><path d="M19 21 L22 18 L22 21 Z" fill="#555"/></g><g transform="translate(629.4,251)"><rect x="1.5" y="2.5" width="12" height="7.5" fill="#fdf6dc" stroke="#8a8a8a"/><path d="M13.5 6 L20 6 L17 13" stroke="#333" stroke-width="1.4" fill="none"/><path d="M14.5 13 L19 14 L16 10 Z" fill="#333"/><ellipse cx="13.5" cy="17.5" rx="6" ry="3.3" fill="#333"/><circle cx="13.5" cy="17.5" r="1.5" fill="#eee"/></g><g transform="translate(661.3,251)"><path d="M5 5 L10 11 L18 11 M10 11 L5 17" stroke="#555" stroke-width="1.2" fill="none"/><circle cx="5" cy="5" r="2.8" fill="#5aa65a"/><circle cx="18" cy="11" r="2.8" fill="#e06c6c"/><circle cx="5" cy="17" r="2.8" fill="#2f7fae"/></g><g transform="translate(693.3,251)"><rect x="-3.5" y="-3.5" width="28" height="28" fill="#dcdde0" stroke="#b2b4b7"/><path d="M3.5 19 Q7 12 12 12 Q16 11 18.5 3" stroke="#555" stroke-width="1.6" fill="none"/><circle cx="3.5" cy="19" r="2.5" fill="#5bc4f2"/><circle cx="18.5" cy="3" r="2.5" fill="#5bc4f2"/></g><g transform="translate(725.3,251)"><defs><linearGradient id="tk" x1="0" y1="0" x2="1" y2="1"><stop offset="0" stop-color="#ddd"/><stop offset="1" stop-color="#777"/></linearGradient></defs><path d="M3 17 Q6 10 12 7 Q16 5 19 2" stroke="url(#tk)" stroke-width="7" fill="none" stroke-linecap="round"/><circle cx="5" cy="17" r="4" fill="#888"/><circle cx="5" cy="17" r="2.5" fill="#666"/></g><g transform="translate(757.2,251)"><rect x="-3.5" y="-3.5" width="28" height="28" fill="#dcdde0" stroke="#b2b4b7"/><path d="M2 4 L17 4 L19 2 L19 16 L17 18 L2 18 L2 13 Q4 11 2 9 Z" fill="#6fcaef" stroke="#2b86b5" stroke-width="1"/><rect x="6" y="6.5" width="10" height="8.5" fill="#333"/><text x="11" y="14" font-family="Liberation Sans" font-size="8" font-weight="700" fill="#fff" text-anchor="middle">J1</text></g><rect x="634" y="1203" width="1" height="31" fill="#a8a8a8"/><rect x="690" y="1203" width="1" height="31" fill="#a8a8a8"/><rect x="637.5" y="1204.5" width="50" height="29" fill="#fafafa" stroke="#cfcfcf"/><rect x="671" y="1205" width="16" height="28" fill="#dcdde0"/><g transform="translate(643.5,1209.5)"><rect x="4" y="0.5" width="4" height="5" fill="#b0b0b0"/><rect x="12" y="0.5" width="4" height="5" fill="#b0b0b0"/><path d="M0.5 19.5 L1.5 6 Q2 4.5 4 4.5 L9 4.5 L9 11 L11 11 L11 4.5 L16 4.5 Q18 4.5 18.5 6 L19.5 19.5 L12.5 19.5 L11.5 15 L8.5 15 L7.5 19.5 Z" fill="url(#bino)"/></g><path d="M675 1217.5 L683 1217.5 L679 1222 Z" fill="#a8a8a8"/><rect x="810.5" y="1205.5" width="216" height="27" fill="#f8f8f8" stroke="#a9a9a9"/><rect x="1007" y="1206" width="1" height="26" fill="#a9a9a9"/><path d="M1012.5 1217 L1021.5 1217 L1017 1222.5 Z" fill="#555"/></svg>
<div style="position:absolute;left:819.2px;top:1212.4px;font-family:'Liberation Sans',sans-serif;font-size:15px;line-height:15px;font-weight:400;color:#333333;white-space:pre;letter-spacing:0.109px;">All</div>
<svg style="position:absolute;left:0px;top:0px;pointer-events:none;" width="2154" height="1392" viewBox="0 0 2154 1392"><defs><clipPath id="svp"><rect x="43" y="236" width="1000" height="961"/></clipPath></defs><g clip-path="url(#svp)"><path d="M135.7,761.5 L139.1,732.1 C143.1,710.1 200,700 257.9,681.0 C300,667.0 310.3,664.2 332.3,678.2 L329.6,706.9" fill="none" stroke="#eeedf3" stroke-width="1.25" /><circle cx="332.3" cy="678.2" r="1.4" fill="#6e2a52"/><circle cx="329.6" cy="706.9" r="1.4" fill="#6e2a52"/><path d="M138.4,768.3 L141.8,738.3 C145.8,716.3 198,702 257.9,682.3 C300,668.3 328.7,655.4 350.7,669.4 L347.3,700.8" fill="none" stroke="#eeedf3" stroke-width="1.25" /><circle cx="350.7" cy="669.4" r="1.4" fill="#6e2a52"/><circle cx="347.3" cy="700.8" r="1.4" fill="#6e2a52"/><path d="M141.6,774.5 L144.6,744.8 C148.6,722.8 196,704 257.9,683.6 C300,669.6 346.5,652.6 368.5,666.6 L365.7,694.6" fill="none" stroke="#eeedf3" stroke-width="1.25" /><circle cx="368.5" cy="666.6" r="1.4" fill="#6e2a52"/><circle cx="365.7" cy="694.6" r="1.4" fill="#6e2a52"/><path d="M144.6,780.6 L148,751.3 C152,729.3 194,706 257.9,684.9 C300,670.9 336.2,672.4 358.2,686.4 L354.8,717.1" fill="none" stroke="#eeedf3" stroke-width="1.25" /><circle cx="358.2" cy="686.4" r="1.4" fill="#6e2a52"/><circle cx="354.8" cy="717.1" r="1.4" fill="#6e2a52"/><path d="M147.3,787.2 L150.7,757.4 C154.7,735.4 192,708 257.9,686.2 C300,672.2 354.4,666.3 376.4,680.3 L373.2,711" fill="none" stroke="#eeedf3" stroke-width="1.25" /><circle cx="376.4" cy="680.3" r="1.4" fill="#6e2a52"/><circle cx="373.2" cy="711" r="1.4" fill="#6e2a52"/><path d="M150.3,793.6 L153.4,763.8 C165.4,727.8 245,713 440,697.5 C480,693 525,668 564.3,669.6 Q581,670 583.6,679.3 L580.7,708.4" fill="none" stroke="#eeedf3" stroke-width="1.25" /><path d="M153.4,800 L156.6,770.4 C168.6,734.4 242,714 440,698.2 C480,694 520,680 550,676.4 Q563,675 565.2,685.2 L562.3,715.2" fill="none" stroke="#eeedf3" stroke-width="1.25" /><path d="M156.2,806.3 L159.6,775.4 C171.6,739.4 239,715 440,698.9 C500,699 575,700 599.2,712.3 L603,756.9" fill="none" stroke="#eeedf3" stroke-width="1.25" /><path d="M159.3,812.7 L162.3,781.3 C174.3,745.3 236,716 440,699.6 C500,700 565,708 588.5,725.9 L584.6,763.7" fill="none" stroke="#eeedf3" stroke-width="1.25" /><circle cx="583.6" cy="679.3" r="1.4" fill="#6e2a52"/><circle cx="580.7" cy="708.4" r="1.4" fill="#6e2a52"/><circle cx="565.2" cy="685.2" r="1.4" fill="#6e2a52"/><circle cx="562.3" cy="715.2" r="1.4" fill="#6e2a52"/><circle cx="599.2" cy="712.3" r="1.4" fill="#6e2a52"/><circle cx="603" cy="756.9" r="1.4" fill="#6e2a52"/><circle cx="588.5" cy="725.9" r="1.4" fill="#6e2a52"/><circle cx="584.6" cy="763.7" r="1.4" fill="#6e2a52"/><circle cx="139.1" cy="732.1" r="1.4" fill="#6e2a52"/><circle cx="141.8" cy="738.3" r="1.4" fill="#6e2a52"/><circle cx="144.6" cy="744.8" r="1.4" fill="#6e2a52"/><circle cx="148" cy="751.3" r="1.4" fill="#6e2a52"/><circle cx="150.7" cy="757.4" r="1.4" fill="#6e2a52"/><circle cx="153.4" cy="763.8" r="1.4" fill="#6e2a52"/><circle cx="156.6" cy="770.4" r="1.4" fill="#6e2a52"/><circle cx="159.6" cy="775.4" r="1.4" fill="#6e2a52"/><circle cx="162.3" cy="781.3" r="1.4" fill="#6e2a52"/><circle cx="135.7" cy="761.5" r="1.4" fill="#6e2a52"/><circle cx="138.4" cy="768.3" r="1.4" fill="#6e2a52"/><circle cx="141.6" cy="774.5" r="1.4" fill="#6e2a52"/><circle cx="144.6" cy="780.6" r="1.4" fill="#6e2a52"/><circle cx="147.3" cy="787.2" r="1.4" fill="#6e2a52"/><circle cx="150.3" cy="793.6" r="1.4" fill="#6e2a52"/><circle cx="153.4" cy="800" r="1.4" fill="#6e2a52"/><circle cx="156.2" cy="806.3" r="1.4" fill="#6e2a52"/><circle cx="159.3" cy="812.7" r="1.4" fill="#6e2a52"/><path d="M133,755.4 L135.7,726 C140,712 155,711 170,712 C230,718 330,752 438.7,786.6 C520,812 600,840 654.2,897.4" fill="none" stroke="#262a30" stroke-width="1.1" /><circle cx="133" cy="755.4" r="1.4" fill="#6e2a52"/><circle cx="135.7" cy="726" r="1.4" fill="#6e2a52"/><circle cx="654.2" cy="897.4" r="1.4" fill="#6e2a52"/><path d="M162.3,818.8 L165,789.5 C175,768 220,760 270,762 C330,765 400,778 438.7,787.6 C530,810 600,840 662.4,895.4 L677.4,919.2" fill="none" stroke="#b4527e" stroke-width="1.3" /><path d="M162.3,818.8 L165,789.5 C175,768 220,760 270,762 C330,765 400,778 438.7,787.6 C530,810 600,840 662.4,895.4 L677.4,919.2" fill="none" stroke="#d42844" stroke-width="1.1" stroke-dasharray="2.2,2.8"/><circle cx="162.3" cy="818.8" r="1.4" fill="#6e2a52"/><circle cx="165" cy="789.5" r="1.4" fill="#6e2a52"/><path d="M372.3,643.8 L378.6,591.6 Q383,583 390,588 C410,600 440,640 488.6,716.2 C530,770 640,830 671.3,901.5" fill="none" stroke="#262a30" stroke-width="1.1" /><circle cx="378.6" cy="591.6" r="1.4" fill="#6e2a52"/><circle cx="372.3" cy="643.8" r="2" fill="#3ad06a"/><path d="M355,649.5 L359.7,605.9 Q364,596 372,600 C420,625 450,670 489.3,713.3 C540,768 630,840 670.6,902.9" fill="none" stroke="#b4527e" stroke-width="1.3" /><path d="M355,649.5 L359.7,605.9 Q364,596 372,600 C420,625 450,670 489.3,713.3 C540,768 630,840 670.6,902.9" fill="none" stroke="#d42844" stroke-width="1.1" stroke-dasharray="2.2,2.8"/><circle cx="355" cy="649.5" r="1.4" fill="#6e2a52"/><circle cx="359.7" cy="605.9" r="1.4" fill="#6e2a52"/><path d="M646.7,553.3 C610,560 552,605 550.7,653.2 L547.8,683.2" fill="none" stroke="#eeedf3" stroke-width="1.25" /><path d="M649.6,560.1 C622,572 571,612 569.1,647.3 L565.2,676.4" fill="none" stroke="#eeedf3" stroke-width="1.25" /><path d="M655.4,571.7 C630,588 578,632 576.3,663.4 L573,692.9" fill="none" stroke="#eeedf3" stroke-width="1.25" /><circle cx="550.7" cy="653.2" r="1.4" fill="#6e2a52"/><circle cx="547.8" cy="683.2" r="1.4" fill="#6e2a52"/><circle cx="569.1" cy="647.3" r="1.4" fill="#6e2a52"/><circle cx="565.2" cy="676.4" r="1.4" fill="#6e2a52"/><circle cx="576.3" cy="663.4" r="1.4" fill="#6e2a52"/><circle cx="573" cy="692.9" r="1.4" fill="#6e2a52"/><path d="M659,577 Q611.5,627.3 574,701.6 L570.1,730.7" fill="none" stroke="#eeedf3" stroke-width="1.2" /><circle cx="574" cy="701.6" r="1.4" fill="#6e2a52"/><circle cx="570.1" cy="730.7" r="1.4" fill="#6e2a52"/><path d="M661,583 Q615.85,638.55 580.7,718.1 L577.8,747.2" fill="none" stroke="#eeedf3" stroke-width="1.2" /><circle cx="580.7" cy="718.1" r="1.4" fill="#6e2a52"/><circle cx="577.8" cy="747.2" r="1.4" fill="#6e2a52"/><path d="M663.5,589 Q622.45,630.4 591.4,695.8 L584.6,763.7" fill="none" stroke="#eeedf3" stroke-width="1.2" /><circle cx="591.4" cy="695.8" r="1.4" fill="#6e2a52"/><circle cx="584.6" cy="763.7" r="1.4" fill="#6e2a52"/><path d="M666,595 Q625.65,656.2 595.3,741.4 L592.4,779.2" fill="none" stroke="#eeedf3" stroke-width="1.2" /><circle cx="595.3" cy="741.4" r="1.4" fill="#6e2a52"/><circle cx="592.4" cy="779.2" r="1.4" fill="#6e2a52"/><path d="M669,601 Q632.45,652.4 605.9,727.8 L603,756.9" fill="none" stroke="#eeedf3" stroke-width="1.2" /><circle cx="605.9" cy="727.8" r="1.4" fill="#6e2a52"/><circle cx="603" cy="756.9" r="1.4" fill="#6e2a52"/><path d="M672,608 Q630.6,648.15 599.2,712.3 L595.3,748.2" fill="none" stroke="#eeedf3" stroke-width="1.2" /><circle cx="599.2" cy="712.3" r="1.4" fill="#6e2a52"/><circle cx="595.3" cy="748.2" r="1.4" fill="#6e2a52"/><path d="M645.7,584.3 Q625,640 591.4,695.8" fill="none" stroke="#eeedf3" stroke-width="1.2" /><path d="M650,590 Q630,650 598,705" fill="none" stroke="#eeedf3" stroke-width="1.2" /><path d="M645.7,543.6 Q672,556 676.7,700 L676.7,780 L673.3,873.5 L659.7,925.4" fill="none" stroke="#b4527e" stroke-width="1.3" /><path d="M645.7,543.6 Q672,556 676.7,700 L676.7,780 L673.3,873.5 L659.7,925.4" fill="none" stroke="#d42844" stroke-width="1.1" stroke-dasharray="2.2,2.8"/><path d="M660,578 Q683,600 683.5,700 L683.5,780 L680.8,889.2 L677.4,919.2 L674.7,957.5" fill="none" stroke="#b4527e" stroke-width="1.3" /><path d="M660,578 Q683,600 683.5,700 L683.5,780 L680.8,889.2 L677.4,919.2 L674.7,957.5" fill="none" stroke="#d42844" stroke-width="1.1" stroke-dasharray="2.2,2.8"/><path d="M663,580 Q686,600 684.9,700 L684.9,780 L688.3,905.6 L684.9,935" fill="none" stroke="#262a30" stroke-width="1.1" /><path d="M676.7,617.3 Q688,640 687.6,700 L687.6,780 L695.8,922 L692.4,951.3" fill="none" stroke="#b4527e" stroke-width="1.3" /><path d="M676.7,617.3 Q688,640 687.6,700 L687.6,780 L695.8,922 L692.4,951.3" fill="none" stroke="#d42844" stroke-width="1.1" stroke-dasharray="2.2,2.8"/><path d="M645.7,545 L640.5,576.5" fill="none" stroke="#b4527e" stroke-width="1.3" /><path d="M645.7,545 L640.5,576.5" fill="none" stroke="#d42844" stroke-width="1.1" stroke-dasharray="2.2,2.8"/><path d="M669.2,919.9 L667.2,941.1" fill="none" stroke="#262a30" stroke-width="1.1" /><circle cx="645.7" cy="543.6" r="1.4" fill="#6e2a52"/><circle cx="640.5" cy="576.5" r="1.4" fill="#6e2a52"/><circle cx="673.3" cy="873.5" r="1.4" fill="#6e2a52"/><circle cx="659.7" cy="925.4" r="1.4" fill="#6e2a52"/><circle cx="680.8" cy="889.2" r="1.4" fill="#6e2a52"/><circle cx="677.4" cy="919.2" r="1.4" fill="#6e2a52"/><circle cx="674.7" cy="957.5" r="1.4" fill="#6e2a52"/><circle cx="688.3" cy="905.6" r="1.4" fill="#6e2a52"/><circle cx="684.9" cy="935" r="1.4" fill="#6e2a52"/><circle cx="695.8" cy="922" r="1.4" fill="#6e2a52"/><circle cx="692.4" cy="951.3" r="1.4" fill="#6e2a52"/><circle cx="669.2" cy="919.9" r="1.4" fill="#6e2a52"/><circle cx="667.2" cy="941.1" r="1.4" fill="#6e2a52"/><circle cx="670.6" cy="902.9" r="1.4" fill="#6e2a52"/><circle cx="662.4" cy="895.4" r="1.4" fill="#6e2a52"/><circle cx="646.7" cy="553.3" r="1.4" fill="#6e2a52"/><circle cx="649.6" cy="560.1" r="1.4" fill="#6e2a52"/><circle cx="652.5" cy="565" r="1.4" fill="#6e2a52"/><circle cx="655.4" cy="571.7" r="1.4" fill="#6e2a52"/><circle cx="659" cy="577" r="1.4" fill="#6e2a52"/><circle cx="661" cy="583" r="1.4" fill="#6e2a52"/><circle cx="663.5" cy="589" r="1.4" fill="#6e2a52"/><circle cx="666" cy="595" r="1.4" fill="#6e2a52"/><circle cx="669" cy="601" r="1.4" fill="#6e2a52"/><circle cx="672" cy="608" r="1.4" fill="#6e2a52"/><circle cx="676.7" cy="617.3" r="1.4" fill="#6e2a52"/><path d="M256 679 L259 687 M259 679 L262 687" stroke="#7a2a52" stroke-width="1.6"/><path d="M439 693 L440 701 M442 693 L443 701" stroke="#7a2a52" stroke-width="1.4"/><path d="M437 783 L438 791" stroke="#7a2a52" stroke-width="2"/><circle cx="488.6" cy="718" r="5" fill="none" stroke="#6a70f0" stroke-width="1.6"/><path d="M479 718 L498 718 M488.6 708 L488.6 728" stroke="#6a70f0" stroke-width="1.2"/><circle cx="491" cy="716" r="2" fill="#3ad06a"/></g></svg>
<div style="position:absolute;left:2010px;top:0px;width:144px;height:327px;background:#e6e7e9;"></div>
<div style="position:absolute;left:2010px;top:0px;width:2px;height:327px;background:#d9dadc;"></div>
<div style="position:absolute;left:2012px;top:37px;width:142px;height:24px;background:#c9cbce;"></div>
<div style="position:absolute;left:2012px;top:61px;width:142px;height:30px;background:#fafafa;"></div>
<div style="position:absolute;left:2012px;top:91px;width:142px;height:24px;background:#c9cbce;"></div>
<div style="position:absolute;left:2012px;top:115px;width:142px;height:209px;background:#ffffff;"></div>
<div style="position:absolute;left:2012px;top:115px;width:1px;height:209px;background:#a8a8a8;"></div>
<div style="position:absolute;left:2012px;top:324px;width:142px;height:1px;background:#b4b7bb;"></div>
<div style="position:absolute;left:2013px;top:142px;width:141px;height:26px;background:#58595b;"></div>
<div style="position:absolute;left:2035px;top:12.8px;font-family:'Liberation Sans',sans-serif;font-size:15px;line-height:15px;font-weight:400;color:#a8a8a8;white-space:pre;letter-spacing:-0.109px;">Menu Manager</div>
<div style="position:absolute;left:2042px;top:42.2px;font-family:'Liberation Sans',sans-serif;font-size:15px;line-height:15px;font-weight:400;color:#2b2b2b;white-space:pre;transform:scaleX(0.8802);transform-origin:0 0;">CABLE MFG</div>
<div style="position:absolute;left:2017px;top:69.0px;font-family:'Liberation Sans',sans-serif;font-size:15px;line-height:15px;font-weight:400;color:#2b2b2b;white-space:pre;letter-spacing:-0.266px;">Flatten</div>
<div style="position:absolute;left:2042px;top:96.1px;font-family:'Liberation Sans',sans-serif;font-size:15px;line-height:15px;font-weight:400;color:#2b2b2b;white-space:pre;transform:scaleX(0.8648);transform-origin:0 0;">FLATTEN</div>
<div style="position:absolute;left:2038.3px;top:121.8px;font-family:'Liberation Sans',sans-serif;font-size:15px;line-height:15px;font-weight:400;color:#3c3c3c;white-space:pre;">Lay Out</div>
<div style="position:absolute;left:2038.3px;top:147.8px;font-family:'Liberation Sans',sans-serif;font-size:15px;line-height:15px;font-weight:400;color:#ffffff;white-space:pre;">Move Segment</div>
<div style="position:absolute;left:2038.3px;top:173.8px;font-family:'Liberation Sans',sans-serif;font-size:15px;line-height:15px;font-weight:400;color:#3c3c3c;white-space:pre;">Bend</div>
<div style="position:absolute;left:2038.3px;top:199.8px;font-family:'Liberation Sans',sans-serif;font-size:15px;line-height:15px;font-weight:400;color:#3c3c3c;white-space:pre;">Twist</div>
<div style="position:absolute;left:2038.3px;top:225.8px;font-family:'Liberation Sans',sans-serif;font-size:15px;line-height:15px;font-weight:400;color:#3c3c3c;white-space:pre;">Break</div>
<div style="position:absolute;left:2038.3px;top:251.8px;font-family:'Liberation Sans',sans-serif;font-size:15px;line-height:15px;font-weight:400;color:#3c3c3c;white-space:pre;">Delete</div>
<div style="position:absolute;left:2038.3px;top:277.8px;font-family:'Liberation Sans',sans-serif;font-size:15px;line-height:15px;font-weight:400;color:#3c3c3c;white-space:pre;">Components</div>
<div style="position:absolute;left:2038.3px;top:303.8px;font-family:'Liberation Sans',sans-serif;font-size:15px;line-height:15px;font-weight:700;color:#3c3c3c;white-space:pre;">Done/Quit</div>
<svg style="position:absolute;left:2022px;top:41px;" width="12" height="16" viewBox="0 0 12 16"><path d="M2 1 L10 8 L2 15 Z" fill="#1e1e1e"/></svg>
<svg style="position:absolute;left:2016px;top:96px;" width="18" height="12" viewBox="0 0 18 12"><path d="M1 2 L16 2 L8.5 10 Z" fill="#1e1e1e"/></svg>
<svg style="position:absolute;left:2140px;top:71px;" width="12" height="8" viewBox="0 0 12 8"><path d="M1 1 L11 1 L6 6 Z" fill="#7a7a7a"/></svg></body></html>
